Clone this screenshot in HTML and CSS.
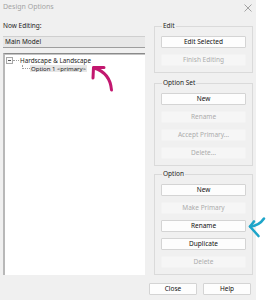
FILE: index.html
```html
<!DOCTYPE html>
<html>
<head>
<meta charset="utf-8">
<link rel="stylesheet" href="styles.css">
</head>
<body>
<div class="dialog">
  <div class="titlebar">
    <span class="title">Design Options</span>
    <svg class="close" width="8" height="8" viewBox="0 0 8 8"><path d="M0.5 0.5 L7.5 7.5 M7.5 0.5 L0.5 7.5" stroke="#9a9a9a" stroke-width="0.9"/></svg>
  </div>
  <div class="main">
    <div class="left">
      <div class="caption">Now Editing:</div>
      <div class="current">Main Model</div>
      <div class="tree">
        <div class="node">
          <span class="toggle"><span class="minus"></span></span>
          <span class="hline"></span>
          <span class="node-text">Hardscape &amp; Landscape</span>
        </div>
        <div class="child">
          <span class="elbow"></span>
          <span class="child-text">Option 1 &lt;primary&gt;</span>
        </div>
      </div>
    </div>
    <div class="right">
      <fieldset class="group group-edit">
        <legend>Edit</legend>
        <button class="btn">Edit Selected</button>
        <button class="btn" disabled>Finish Editing</button>
      </fieldset>
      <fieldset class="group group-set">
        <legend>Option Set</legend>
        <button class="btn">New</button>
        <button class="btn" disabled>Rename</button>
        <button class="btn" disabled>Accept Primary...</button>
        <button class="btn" disabled>Delete...</button>
      </fieldset>
      <fieldset class="group group-opt">
        <legend>Option</legend>
        <button class="btn">New</button>
        <button class="btn" disabled>Make Primary</button>
        <button class="btn">Rename</button>
        <button class="btn">Duplicate</button>
        <button class="btn" disabled>Delete</button>
      </fieldset>
    </div>
  </div>
  <div class="footer">
    <button class="btn btn-foot">Close</button>
    <button class="btn btn-foot">Help</button>
  </div>
</div>
<svg class="annot" width="273" height="300" viewBox="0 0 273 300">
  <g fill="none" stroke="#c2176f" stroke-width="3" stroke-linecap="round" stroke-linejoin="round">
    <path d="M111.5 90 C110.5 78 104 71 94 68"/>
    <path d="M104 67.5 L93.5 67.5 L93 78"/>
  </g>
  <g fill="none" stroke="#1ea5c9" stroke-width="2.6" stroke-linecap="round" stroke-linejoin="round">
    <path d="M264 218.5 C261 223 256 226 250 226.5"/>
    <path d="M254 221.5 L250 226.5 L258.5 236"/>
  </g>
</svg>
</body>
</html>
```
FILE: styles.css
```css
* { box-sizing: border-box; }
html, body {
  margin: 0;
  padding: 0;
  background: #ffffff;
}
body {
  width: 273px;
  height: 300px;
  position: relative;
  overflow: hidden;
  font-family: "Noto Sans", "Open Sans", sans-serif;
  font-size: 6.5px;
  color: #1a1a1a;
}
.dialog {
  width: 256px;
  height: 300px;
  background: #f0f0f0;
  display: flex;
  flex-direction: column;
}
.titlebar {
  height: 19px;
  display: flex;
  align-items: flex-start;
  justify-content: space-between;
  padding: 2px 4px 0 3px;
}
.title {
  font-size: 7px;
  line-height: 9px;
  color: #a4a4a4;
}
.close {
  margin-top: 2px;
}
.main {
  display: flex;
  gap: 9px;
  padding: 0 3px 0 3px;
}
.left {
  width: 142px;
  display: flex;
  flex-direction: column;
}
.caption {
  height: 14px;
  line-height: 14px;
  color: #222;
}
.current {
  margin-top: 3px;
  height: 12px;
  line-height: 10px;
  padding-left: 2px;
  background: #e8e8e8;
  border-top: 1px solid #cfcfcf;
  border-bottom: 1px solid #9e9e9e;
  color: #1a1a1a;
}
.tree {
  margin-top: 5px;
  height: 222px;
  background: #ffffff;
  border-top: 1px solid #8a8a8a;
  border-left: 2px solid #b8b8b8;
  box-shadow: inset 0 1px 0 #c4c4c4;
  padding: 2px 0 0 1px;
}
.node {
  display: flex;
  align-items: center;
  height: 9px;
}
.toggle {
  width: 7px;
  height: 7px;
  border: 1px solid #a8a8a8;
  background: #fafafa;
  display: flex;
  align-items: center;
  justify-content: center;
}
.minus {
  width: 3px;
  height: 1px;
  background: #555;
}
.hline {
  width: 6px;
  border-top: 1px dotted #a0a0a0;
  margin-right: 1px;
}
.node-text {
  font-size: 6.3px;
  line-height: 9px;
  color: #1a1a1a;
}
.child {
  display: flex;
  align-items: flex-end;
  height: 7px;
  padding-left: 16px;
}
.elbow {
  width: 8px;
  height: 4px;
  border-left: 1px dotted #a0a0a0;
  border-bottom: 1px dotted #a0a0a0;
  margin-bottom: 3px;
}
.child-text {
  font-size: 6.1px;
  line-height: 7px;
  padding: 0 1px;
  letter-spacing: -0.05px;
  background: #e6e6e6;
  color: #1a1a1a;
}
.right {
  width: 99px;
  display: flex;
  flex-direction: column;
}
.group {
  margin: 0;
  padding: 5px 6px 6px 6px;
  border: 1px solid #dadada;
  display: flex;
  flex-direction: column;
  gap: 6px;
  min-width: 0;
}
.group legend {
  padding: 0 1px;
  margin-left: 1px;
  line-height: 10px;
  height: 10px;
  color: #222;
}
.group-edit { margin-top: 2px; }
.group-set { margin-top: 5px; }
.group-opt { margin-top: 3px; }
.btn {
  height: 12px;
  width: 85px;
  padding: 0;
  margin: 0;
  font-family: inherit;
  font-size: 6.5px;
  line-height: 10px;
  color: #111;
  background: #fdfdfd;
  border: 1px solid #d4d4d4;
  border-radius: 1px;
}
.btn:disabled {
  background: #f6f6f6;
  border-color: #f3f3f3;
  color: #acacac;
}
.footer {
  display: flex;
  justify-content: flex-end;
  gap: 6px;
  padding: 8px 5px 0 0;
}
.btn-foot {
  width: 48px;
}
.annot {
  position: absolute;
  left: 0;
  top: 0;
  pointer-events: none;
}
```
